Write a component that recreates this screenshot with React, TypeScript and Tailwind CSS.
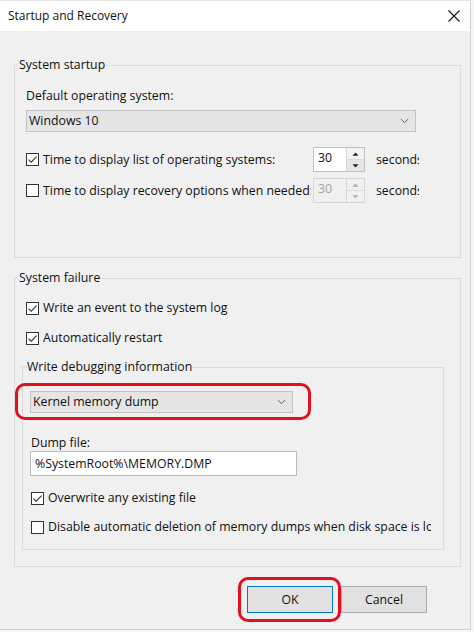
import type { ReactNode } from 'react'

function Check({ checked }: { checked?: boolean }) {
  return (
    <span className="flex h-[13px] w-[13px] shrink-0 items-center justify-center border border-[#333] bg-white">
      {checked && (
        <svg width="11" height="11" viewBox="0 0 11 11">
          <path d="M1.6 5.6 L4.2 8.2 L9.6 2.6" fill="none" stroke="#333" strokeWidth="1.1" />
        </svg>
      )}
    </span>
  )
}

function Chevron() {
  return (
    <svg width="9" height="6" viewBox="0 0 9 6" className="shrink-0">
      <path d="M0.8 1 L4.5 4.7 L8.2 1" fill="none" stroke="#606060" strokeWidth="1" />
    </svg>
  )
}

function Combo({ value, width }: { value: string; width: string }) {
  return (
    <div className={`flex h-[22px] items-center justify-between border border-[#c4c4c4] bg-[#e5e5e5] pl-[2px] pr-[6px] ${width}`}>
      <span>{value}</span>
      <Chevron />
    </div>
  )
}

function Arrow({ up, color }: { up?: boolean; color: string }) {
  return (
    <svg width="7" height="4" viewBox="0 0 7 4">
      <path d={up ? 'M0.5 3.8 L3.5 0.5 L6.5 3.8 Z' : 'M0.5 0.2 L3.5 3.5 L6.5 0.2 Z'} fill={color} />
    </svg>
  )
}

function Spin({ value, disabled }: { value: string; disabled?: boolean }) {
  const arrow = disabled ? '#b0b0b0' : '#222'
  return (
    <div className={`ml-[2px] flex h-[25px] w-[52px] shrink-0 border ${disabled ? 'border-[#d6d6d6]' : 'border-[#c2c2c2]'}`}>
      <div className={`flex w-[32px] items-start pl-[4px] pt-[2px] ${disabled ? 'bg-[#f0f0f0] text-[#a3a3a3]' : 'bg-white'}`}>
        {value}
      </div>
      <div className="flex flex-1 flex-col border-l border-[#d6d6d6]">
        <div className={`flex flex-1 items-center justify-center ${disabled ? 'bg-[#f0f0f0]' : 'bg-[#f3f3f3]'}`}>
          <Arrow up color={arrow} />
        </div>
        <div className={`flex flex-1 items-center justify-center border-t border-[#dadada] ${disabled ? 'bg-[#f0f0f0]' : 'bg-[#e6e6e6]'}`}>
          <Arrow color={arrow} />
        </div>
      </div>
    </div>
  )
}

function Group({ title, className, children }: { title: string; className?: string; children: ReactNode }) {
  return (
    <fieldset className={`border border-[#dcdcdc] ${className ?? ''}`}>
      <legend className="ml-[3px] px-[1px] leading-[16px]">{title}</legend>
      {children}
    </fieldset>
  )
}

function CheckRow({ checked, label, className }: { checked?: boolean; label: string; className?: string }) {
  return (
    <div className={`flex h-[20px] items-center gap-[4px] whitespace-nowrap ${className ?? ''}`}>
      <Check checked={checked} />
      <span className="overflow-hidden">{label}</span>
    </div>
  )
}

function Ring({ className }: { className: string }) {
  return <div className={`pointer-events-none absolute rounded-[10px] border-[3px] border-[#e2101c] ${className}`} />
}

export default function App() {
  return (
    <div className="h-[632px] w-[474px] overflow-hidden bg-[#f6f6f6] font-['Open_Sans',sans-serif] text-[12.3px] leading-[16px] text-[#111]">
      <div className="flex h-[630px] w-[471px] flex-col border-r border-b border-t border-[#d2d2d2] border-t-[#e4e4e4]">
        <div className="flex h-[30px] shrink-0 items-center justify-between bg-white pl-[8px] pr-[10px]">
          <span className="text-[12px]">Startup and Recovery</span>
          <svg width="12" height="12" viewBox="0 0 12 12">
            <path d="M0.5 0.5 L11.5 11.5 M11.5 0.5 L0.5 11.5" stroke="#111" strokeWidth="1.1" />
          </svg>
        </div>

        <div className="flex-1 bg-[#f0f0f0] pl-[14px]">
          <Group title="System startup" className="mt-[26px] w-[447px]">
            <div className="pb-[54px] pl-[11px] pt-[15px]">
              <div>Default operating system:</div>
              <div className="mt-[6px]">
                <Combo value="Windows 10" width="w-[390px]" />
              </div>
              <div className="mt-[15px] flex h-[25px] items-center">
                <div className="flex w-[285px] items-center gap-[4px] overflow-hidden whitespace-nowrap">
                  <Check checked />
                  <span>Time to display list of operating systems:</span>
                </div>
                <Spin value="30" />
                <span className="ml-[11px] w-[43px] overflow-hidden whitespace-nowrap">seconds</span>
              </div>
              <div className="mt-[6px] flex h-[25px] items-center">
                <div className="flex w-[285px] items-center gap-[4px] overflow-hidden whitespace-nowrap">
                  <Check />
                  <span>Time to display recovery options when needed:</span>
                </div>
                <Spin value="30" disabled />
                <span className="ml-[11px] w-[43px] overflow-hidden whitespace-nowrap">seconds</span>
              </div>
            </div>
          </Group>

          <Group title="System failure" className="mt-[12px] w-[447px]">
            <div className="pb-[16px] pl-[11px] pt-[12px]">
              <CheckRow checked label="Write an event to the system log" />
              <CheckRow checked label="Automatically restart" className="mt-[10px]" />

              <fieldset className="-ml-[4px] mt-[11px] w-[422px] border border-[#dcdcdc]">
                <legend className="ml-[4px] leading-[16px]">Write debugging information</legend>
                <div className="pb-[12px] pl-[7px] pt-[16px]">
                  <div className="relative w-[263px]">
                    <Combo value="Kernel memory dump" width="w-[263px]" />
                    <Ring className="-bottom-[7px] -left-[15px] -right-[18px] -top-[8px]" />
                  </div>
                  <div className="ml-[1px] mt-[22px]">Dump file:</div>
                  <div className="flex h-[25px] w-[267px] items-center border border-[#bcbcbc] bg-white pl-[4px]">
                    %SystemRoot%\MEMORY.DMP
                  </div>
                  <CheckRow checked label="Overwrite any existing file" className="ml-[1px] mt-[12px]" />
                  <CheckRow
                    label="Disable automatic deletion of memory dumps when disk space is low"
                    className="ml-[1px] mt-[9px] w-[400px] overflow-hidden"
                  />
                </div>
              </fieldset>
            </div>
          </Group>

          <div className="mt-[19px] flex justify-end gap-[8px] pr-[43px]">
            <div className="relative">
              <button className="flex h-[27px] w-[86px] items-center justify-center border border-[#0078d7] bg-[#e1e1e1]">
                OK
              </button>
              <Ring className="-bottom-[9px] -left-[9px] -right-[8px] -top-[9px]" />
            </div>
            <button className="flex h-[27px] w-[86px] items-center justify-center border border-[#adadad] bg-[#e1e1e1]">
              Cancel
            </button>
          </div>
        </div>
      </div>
    </div>
  )
}
